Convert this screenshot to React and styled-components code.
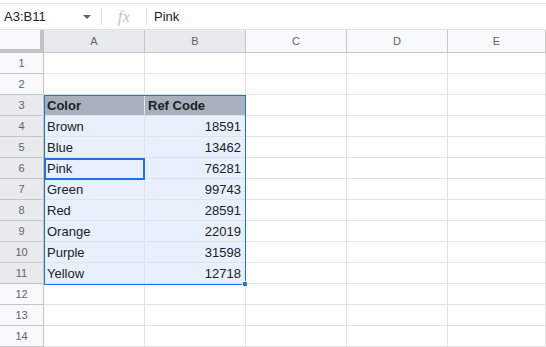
import React from "react";
import styled, { createGlobalStyle } from "styled-components";

const GlobalStyle = createGlobalStyle`
  html, body {
    margin: 0;
    padding: 0;
    background: #fff;
    font-family: "Liberation Sans", Arial, sans-serif;
  }
`;

const Page = styled.div`
  width: 546px;
  height: 347px;
  overflow: hidden;
  padding-top: 3px;
  box-sizing: border-box;
`;

const FormulaBar = styled.div`
  display: flex;
  align-items: center;
  height: 25px;
  border-top: 1px solid #e0e0e0;
  border-bottom: 1px solid #e0e0e0;
  color: #202124;
  font-size: 13px;
`;

const NameBox = styled.div`
  width: 102px;
  box-sizing: border-box;
  display: flex;
  align-items: center;
  justify-content: space-between;
  padding: 0 10px 0 4px;
  border-right: 1px solid #e0e0e0;
  height: 17px;
`;

const Caret = styled.span`
  width: 0;
  height: 0;
  border-left: 4px solid transparent;
  border-right: 4px solid transparent;
  border-top: 4px solid #5f6368;
`;

const Fx = styled.div`
  width: 44px;
  height: 17px;
  display: flex;
  align-items: center;
  justify-content: center;
  border-right: 1px solid #e0e0e0;
  font-family: "Liberation Serif", "Times New Roman", serif;
  font-style: italic;
  font-size: 17px;
  color: #c4c7c5;
`;

const FormulaText = styled.div`
  padding-left: 7px;
`;

const Grid = styled.div`
  position: relative;
  display: grid;
  grid-template-columns: 44px repeat(4, 101px) 1fr;
  grid-auto-rows: 21px;
  grid-template-rows: 23px;
`;

const Corner = styled.div`
  background: #f8f9fa;
  border-right: 4px solid #c0c4c9;
  border-bottom: 4px solid #c0c4c9;
  box-sizing: border-box;
`;

const ColHead = styled.div`
  display: flex;
  align-items: center;
  justify-content: center;
  font-size: 11px;
  color: #5f6368;
  background: ${p => (p.$sel ? "#e8eaed" : "#f8f9fa")};
  border-right: 1px solid #c4c7c5;
  border-bottom: 1px solid #c4c7c5;
  box-sizing: border-box;
`;

const RowHead = styled.div`
  display: flex;
  align-items: center;
  justify-content: center;
  font-size: 11px;
  color: #5f6368;
  background: ${p => (p.$sel ? "#e8eaed" : "#f8f9fa")};
  border-right: 1px solid #c4c7c5;
  border-bottom: 1px solid #c4c7c5;
  box-sizing: border-box;
`;

const Cell = styled.div`
  display: flex;
  align-items: center;
  justify-content: ${p => (p.$num ? "flex-end" : "flex-start")};
  padding: 0 4px 0 3px;
  font-size: 13px;
  font-weight: ${p => (p.$head ? 700 : 400)};
  color: #202124;
  background: ${p => (p.$head ? "#a8b0bc" : p.$sel ? "#e8f0fe" : "#fff")};
  border-right: 1px solid #e2e3e3;
  border-bottom: 1px solid #e2e3e3;
  box-sizing: border-box;
  white-space: nowrap;
  overflow: hidden;
`;

const Selection = styled.div`
  position: absolute;
  left: 44px;
  top: 65px;
  width: 202px;
  height: 190px;
  border: 1px solid #1a73e8;
  box-sizing: border-box;
  pointer-events: none;
`;

const ActiveCell = styled.div`
  position: absolute;
  left: 44px;
  top: 128px;
  width: 101px;
  height: 22px;
  border: 2px solid #1a73e8;
  box-sizing: border-box;
  pointer-events: none;
`;

const FillHandle = styled.div`
  position: absolute;
  left: 242px;
  top: 251px;
  width: 6px;
  height: 6px;
  background: #1a73e8;
  border: 1px solid #fff;
  box-sizing: border-box;
`;

const columns = ["A", "B", "C", "D", "E"];

const data = {
  3: ["Color", "Ref Code"],
  4: ["Brown", 18591],
  5: ["Blue", 13462],
  6: ["Pink", 76281],
  7: ["Green", 99743],
  8: ["Red", 28591],
  9: ["Orange", 22019],
  10: ["Purple", 31598],
  11: ["Yellow", 12718],
};

export default function App() {
  const rows = Array.from({ length: 14 }, (_, i) => i + 1);

  return (
    <Page>
      <GlobalStyle />
      <FormulaBar>
        <NameBox>
          A3:B11
          <Caret />
        </NameBox>
        <Fx>fx</Fx>
        <FormulaText>Pink</FormulaText>
      </FormulaBar>

      <Grid>
        <Corner />
        {columns.map((c, i) => (
          <ColHead key={c} $sel={i < 2}>{c}</ColHead>
        ))}

        {rows.map(r => {
          const sel = r >= 3 && r <= 11;
          const vals = data[r] || [];
          return (
            <React.Fragment key={r}>
              <RowHead $sel={sel}>{r}</RowHead>
              {columns.map((c, i) => {
                const v = i < 2 ? vals[i] : undefined;
                return (
                  <Cell
                    key={c}
                    $sel={sel && i < 2}
                    $head={r === 3 && i < 2}
                    $num={typeof v === "number"}
                  >
                    {v}
                  </Cell>
                );
              })}
            </React.Fragment>
          );
        })}

        <Selection />
        <ActiveCell />
        <FillHandle />
      </Grid>
    </Page>
  );
}
